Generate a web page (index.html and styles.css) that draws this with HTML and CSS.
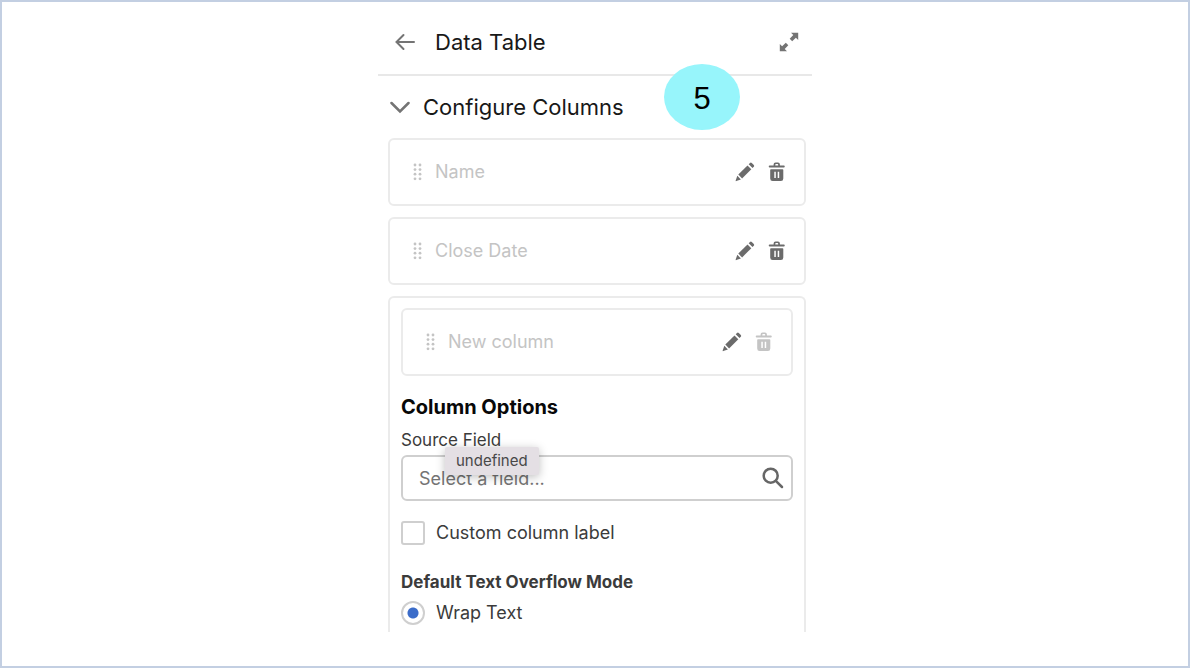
FILE: index.html
```html
<!DOCTYPE html>
<html lang="en">
<head>
<meta charset="utf-8">
<meta name="viewport" content="width=device-width, initial-scale=1">
<title>Data Table</title>
<link rel="stylesheet" href="styles.css">
</head>
<body>
<svg class="sprite" aria-hidden="true">
  <symbol id="grip" viewBox="0 0 10 18">
    <circle cx="2" cy="2" r="1.4"/><circle cx="7" cy="2" r="1.4"/>
    <circle cx="2" cy="6.6" r="1.4"/><circle cx="7" cy="6.6" r="1.4"/>
    <circle cx="2" cy="11.2" r="1.4"/><circle cx="7" cy="11.2" r="1.4"/>
    <circle cx="2" cy="15.8" r="1.4"/><circle cx="7" cy="15.8" r="1.4"/>
  </symbol>
  <symbol id="pencil" viewBox="0 0 20 20">
    <path d="M13.700 2.200 15 .9q.9-.8 1.800 0l2 2q.9.9 0 1.800l-1.300 1.300z"/>
    <path d="M12.500 3.400 16.300 7.200 7.100 16.400 3.300 12.600z"/>
    <path d="M2.300 13.800 5.900 17.400 1.300 19.100Q.4 19.300.7 18.400z"/>
  </symbol>
  <symbol id="trash" viewBox="0 0 18 20">
    <path d="M1.600 3.400H5.600V2.500Q5.600.5 7.500.5h2.500q1.900 0 1.900 2v.9h4q.8 0 .8.700v.6q0 .7-.8.700H1.600q-.8 0-.8-.7v-.6q0-.7.8-.7zM7.300 3.400h2.900v-.7q0-.6-.6-.6H7.900q-.6 0-.6.6z" fill-rule="evenodd"/>
    <path d="M3 7.300h11.500q.8 0 .8.800v8.500q0 2.500-2.400 2.500H4.600q-2.400 0-2.400-2.500V8.100q0-.8.800-.8zM6.300 9.700v6.400h1.500V9.700zM9.700 9.700v6.400h1.500V9.700z" fill-rule="evenodd"/>
  </symbol>
</svg>
<main class="frame">
  <section class="panel">
    <header class="panel-header">
      <button class="icon-button" type="button" aria-label="Back">
        <svg class="icon-back" viewBox="0 0 20 18"><path d="M8.500 2 1.500 9l7 7M1.500 9H19"/></svg>
      </button>
      <h1 class="panel-title">Data Table</h1>
      <button class="icon-button" type="button" aria-label="Expand">
        <svg class="icon-expand" viewBox="0 0 20 20"><path d="M12 .8h7.200V8l-2.300-2.300-3.700 3.600-2.500-2.500 3.600-3.700zM.8 12l2.300 2.300 3.700-3.600 2.500 2.500-3.600 3.700L8 19.200H.8z"/></svg>
      </button>
    </header>
    <button class="section-toggle" type="button" aria-expanded="true">
      <svg class="icon-chevron" viewBox="0 0 20 14"><path d="M1.500 3 10 11.500 18.500 3"/></svg>
      <span>Configure Columns</span>
    </button>
    <span class="step-badge">5</span>
    <div class="columns">
      <div class="card">
        <svg class="icon-grip"><use href="#grip"/></svg>
        <span class="card-label">Name</span>
        <button class="icon-button" type="button" aria-label="Edit Name"><svg class="icon-pencil"><use href="#pencil"/></svg></button>
        <button class="icon-button" type="button" aria-label="Delete Name"><svg class="icon-trash"><use href="#trash"/></svg></button>
      </div>
      <div class="card">
        <svg class="icon-grip"><use href="#grip"/></svg>
        <span class="card-label">Close Date</span>
        <button class="icon-button" type="button" aria-label="Edit Close Date"><svg class="icon-pencil"><use href="#pencil"/></svg></button>
        <button class="icon-button" type="button" aria-label="Delete Close Date"><svg class="icon-trash"><use href="#trash"/></svg></button>
      </div>
      <div class="editor">
        <div class="card">
          <svg class="icon-grip"><use href="#grip"/></svg>
          <span class="card-label">New column</span>
          <button class="icon-button" type="button" aria-label="Edit New column"><svg class="icon-pencil"><use href="#pencil"/></svg></button>
          <button class="icon-button" type="button" aria-label="Delete New column" disabled><svg class="icon-trash"><use href="#trash"/></svg></button>
        </div>
        <h2 class="options-title">Column Options</h2>
        <label class="field-label" for="source">Source Field</label>
        <div class="field">
          <input class="field-input" id="source" type="text" placeholder="Select a field...">
          <svg class="icon-search" viewBox="0 0 22 22"><circle cx="8.700" cy="8.700" r="7"/><path d="M13.800 13.800 20 20"/></svg>
          <span class="tooltip" role="tooltip">undefined</span>
        </div>
        <label class="choice"><input class="checkbox" type="checkbox">Custom column label</label>
        <fieldset class="mode">
          <legend class="mode-title">Default Text Overflow Mode</legend>
          <label class="choice"><input class="radio" type="radio" name="overflow" checked>Wrap Text</label>
        </fieldset>
      </div>
    </div>
  </section>
</main>
</body>
</html>
```

FILE: styles.css
```css
* {
  box-sizing: border-box;
}

body {
  margin: 0;
  background: #fff;
  color: #3b3b3b;
  font-family: Inter, "Liberation Sans", sans-serif;
  font-size: 18px;
  line-height: 24px;
}

button {
  padding: 0;
  border: 0;
  background: none;
  color: inherit;
  font: inherit;
}

.sprite {
  position: absolute;
  width: 0;
  height: 0;
}

.frame {
  display: flex;
  justify-content: center;
  min-height: 100vh;
  padding: 8px 8px 34px;
  border: 2px solid #c3cfe2;
}

.panel {
  position: relative;
  display: flex;
  flex-direction: column;
  width: 100%;
  max-width: 434px;
}

.panel-header {
  display: flex;
  align-items: center;
  gap: 20px;
  padding: 16px 13px 16px 17px;
  border-bottom: 2px solid #e8e8e8;
}

.panel-title {
  flex: 1;
  margin: 0;
  color: #181818;
  font-size: 22px;
  font-weight: 400;
  line-height: 32px;
}

.icon-button {
  display: flex;
  color: #6b6b6b;
}

.icon-button:disabled {
  color: #c4c4c4;
}

.icon-back,
.icon-chevron,
.icon-search {
  fill: none;
  stroke: #747474;
  stroke-width: 2;
  stroke-linecap: round;
}

.icon-back {
  width: 20px;
  height: 18px;
}

.icon-expand {
  width: 20px;
  height: 20px;
  fill: #747474;
}

.section-toggle {
  display: flex;
  align-items: center;
  gap: 13px;
  padding: 15px 12px;
  color: #181818;
  font-size: 22px;
  line-height: 32px;
}

.icon-chevron {
  width: 20px;
  height: 14px;
  stroke-width: 2.500;
}

.step-badge {
  position: absolute;
  top: 54px;
  left: 286px;
  width: 76px;
  height: 66px;
  border-radius: 50%;
  background: #97f5fb;
  color: #000;
  font-family: "Liberation Sans", sans-serif;
  font-size: 31px;
  line-height: 70px;
  text-align: center;
}

.columns {
  display: flex;
  flex: 1;
  flex-direction: column;
  gap: 11px;
  padding: 0 6px 0 10px;
}

.card {
  display: flex;
  align-items: center;
  padding: 20px 18px 20px 20px;
  border: 2px solid #ebebeb;
  border-radius: 6px;
}

.card-label {
  flex: 1;
  color: #c4c4c4;
}

.icon-grip {
  width: 10px;
  height: 18px;
  margin: 0 12px 0 3px;
  fill: #c4c4c4;
}

.icon-pencil {
  width: 20px;
  height: 20px;
  margin-right: 13px;
  fill: currentColor;
}

.icon-trash {
  width: 18px;
  height: 20px;
  fill: currentColor;
}

.editor {
  flex: 1;
  padding: 10px 11px 0;
  border: 2px solid #ebebeb;
  border-bottom: 0;
  border-radius: 6px 6px 0 0;
}

.options-title {
  margin: 19px 0 9px;
  color: #080808;
  font-size: 20px;
  font-weight: 700;
  line-height: 24px;
}

.field-label {
  display: block;
  margin-bottom: 3px;
  font-size: 17px;
}

.field {
  position: relative;
  display: flex;
  align-items: center;
  padding-right: 7px;
  border: 2px solid #cfcfcf;
  border-radius: 6px;
}

.field-input {
  flex: 1;
  min-width: 0;
  height: 42px;
  padding: 0 16px;
  border: 0;
  outline: 0;
  background: none;
  color: #3b3b3b;
  font: inherit;
}

.field-input::placeholder {
  color: #747474;
  opacity: 1;
}

.icon-search {
  width: 22px;
  height: 22px;
  stroke: #666;
  stroke-width: 2.500;
}

.tooltip {
  position: absolute;
  top: -10px;
  left: 42px;
  padding: 2px 11px;
  border-radius: 2px;
  background: #e4dfe4;
  box-shadow: 0 2px 10px rgba(0, 0, 0, 0.25);
  color: #484848;
  font-size: 15px;
}

.choice {
  display: flex;
  align-items: center;
  gap: 11px;
}

.field + .choice {
  margin: 20px 0 25px;
}

.checkbox,
.radio {
  width: 24px;
  height: 24px;
  margin: 0;
  border: 2px solid #cfcfcf;
  background: #fff;
  appearance: none;
}

.checkbox {
  border-radius: 3px;
}

.radio {
  border-radius: 50%;
}

.radio:checked {
  background: radial-gradient(circle, #3b6cc9 5px, #fff 6px);
}

.mode {
  margin: 0;
  padding: 0;
  border: 0;
}

.mode-title {
  margin-bottom: 7px;
  padding: 0;
  font-size: 17px;
  font-weight: 700;
}
```
